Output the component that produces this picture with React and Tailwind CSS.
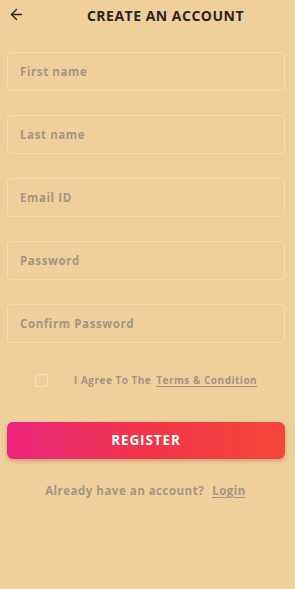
import { ArrowLeft } from 'lucide-react';

const fields = ['First name', 'Last name', 'Email ID', 'Password', 'Confirm Password'];

export default function App() {
  return (
    <div
      className="w-[295px] h-[589px] bg-[#efd09d] text-[#a39580] overflow-hidden"
      style={{ fontFamily: '"Open Sans", "Liberation Sans", sans-serif' }}
    >
      <div className="relative h-[30px] flex items-center justify-center">
        <button className="absolute left-[8px] top-[6px] text-[#2a2420]">
          <ArrowLeft size={17} strokeWidth={2} />
        </button>
        <h1 className="pl-[36px] text-[14px] font-bold tracking-[0.5px] text-[#2a2420]">CREATE AN ACCOUNT</h1>
      </div>

      <div className="pl-[7px] pr-[10px] pt-[22px] flex flex-col gap-[24px]">
        {fields.map((f) => (
          <input
            key={f}
            placeholder={f}
            className="h-[39px] w-full rounded-[4px] border border-[#f5dcb1] bg-transparent px-[12px] text-[11.5px] font-bold tracking-[0.6px] placeholder:text-[#a39580] outline-none"
          />
        ))}
      </div>

      <div className="mt-[30px] flex items-center pl-[35px] h-[14px] text-[10px] font-bold tracking-[0.5px]">
        <span className="w-[13px] h-[13px] rounded-[1px] border-[1.5px] border-[#f7e2bd]"></span>
        <span className="ml-[26px]">I Agree To The</span>
        <a className="ml-[5px] underline underline-offset-2">Terms &amp; Condition</a>
      </div>

      <div className="pl-[7px] pr-[10px] mt-[35px]">
        <button className="w-full h-[37px] rounded-[6px] bg-gradient-to-r from-[#ec237c] via-[#f23548] to-[#f4463a] text-white text-[13.5px] font-bold tracking-[0.9px] shadow-[0_2px_4px_rgba(150,60,40,0.35)]">
          REGISTER
        </button>
      </div>

      <div className="mt-[23px] pr-[4px] text-center text-[11.5px] font-bold tracking-[0.5px]">
        Already have an account?
        <a className="ml-[8px] underline underline-offset-2">Login</a>
      </div>
    </div>
  );
}
